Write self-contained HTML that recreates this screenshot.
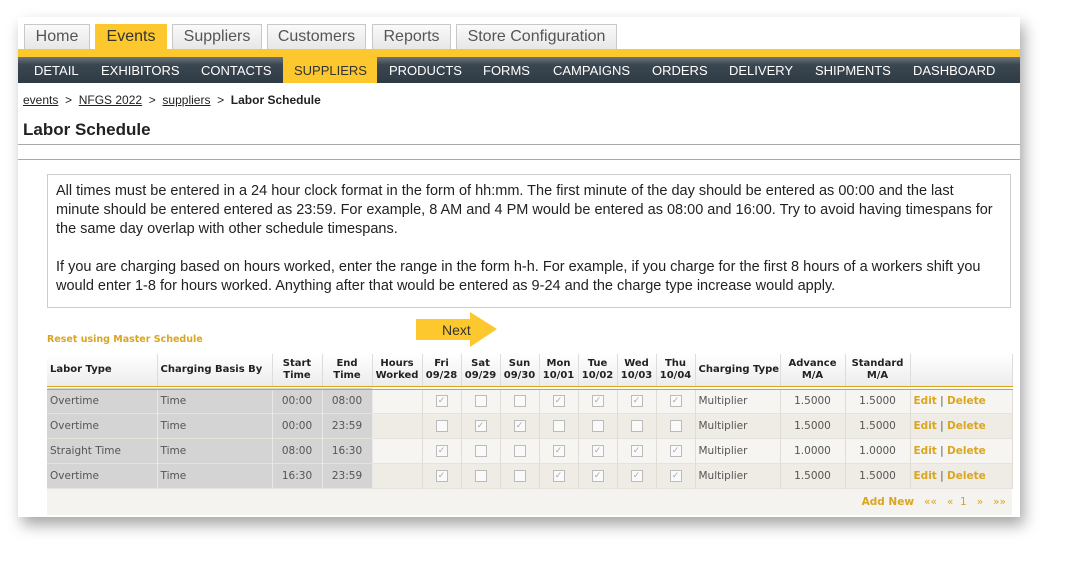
<!DOCTYPE html>
<html><head><meta charset="utf-8"><style>
*{margin:0;padding:0;box-sizing:border-box}
body{width:1068px;height:565px;background:#fff;position:relative;overflow:hidden;font-family:"Liberation Sans",Arial,sans-serif}
.page{position:absolute;left:18px;top:17px;width:1002px;height:500px;background:#fff;box-shadow:4px 8px 14px rgba(0,0,0,.35)}
.a{position:absolute;white-space:nowrap}
.tab{position:absolute;top:7px;height:26px;border:1px solid #c8c8c8;border-bottom:none;background:linear-gradient(#fafafa,#e6e6e6);color:#555;font-size:16px;text-align:center;line-height:24px}
.tab.on{background:#fcc82d;border-color:#fcc82d;color:#333}
.ybar{position:absolute;left:0;top:32px;width:1002px;height:8px;background:#fcc82d}
.nav{position:absolute;left:0;top:40px;width:1002px;height:26px;background:linear-gradient(#6d757c,#3a4650 30%,#2e3a44)}
.nav span{position:absolute;top:0;line-height:27px;color:#fff;font-size:13px}
.sel{position:absolute;left:265px;top:40px;width:94px;height:26px;background:#fcc82d}
.info{position:absolute;left:29px;top:157px;width:964px;height:134px;border:1px solid #ccc;padding:7px 13px 7px 8px;font-size:14.5px;line-height:19px;color:#222}
table{position:absolute;left:29px;top:337px;border-collapse:collapse;font-family:"DejaVu Sans",Verdana,sans-serif;font-size:10.5px;color:#555;table-layout:fixed}
th{height:34px;font-size:10px;color:#222;background:linear-gradient(#fff,#ececec);border-right:1px solid #ddd;border-bottom:4px double #d8a41a;line-height:12px;font-weight:bold}
td{height:25px;border-right:1px solid #e0ddd4;border-top:1px solid #e6e3da;text-align:center}
td.l{text-align:left;padding-left:3px}
td.g{background:#d6d6d6;border-right:1px solid #e8e8e8}
tr.o td{background:#f6f5f1}tr.e td{background:#eeece4}
tr.o td.g,tr.e td.g{background:#d4d4d4}
.cb{display:inline-block;width:12px;height:12px;border:1px solid #bbb;background:#fafafa;font-size:9px;line-height:10px;color:#aaa;vertical-align:middle}
.lk{color:#daa520;font-weight:bold}
</style></head><body>
<div class="page">
<div class="tab" style="left:6px;width:66px">Home</div>
<div class="tab on" style="left:77px;width:72px">Events</div>
<div class="tab" style="left:154px;width:90px">Suppliers</div>
<div class="tab" style="left:249px;width:99px">Customers</div>
<div class="tab" style="left:354px;width:79px">Reports</div>
<div class="tab" style="left:438px;width:161px">Store Configuration</div>
<div class="ybar"></div>
<div class="nav"></div>
<div class="sel"></div>
<div class="nav" style="background:none">
<span style="left:16px">DETAIL</span><span style="left:83px">EXHIBITORS</span><span style="left:183px">CONTACTS</span><span style="left:276px;color:#333">SUPPLIERS</span><span style="left:371px">PRODUCTS</span><span style="left:465px">FORMS</span><span style="left:535px">CAMPAIGNS</span><span style="left:634px">ORDERS</span><span style="left:711px">DELIVERY</span><span style="left:797px">SHIPMENTS</span><span style="left:895px">DASHBOARD</span>
</div>
<div class="a" style="left:5px;top:76px;font-size:12px;color:#222"><u>events</u> &nbsp;&gt;&nbsp; <u>NFGS 2022</u> &nbsp;&gt;&nbsp; <u>suppliers</u> &nbsp;&gt;&nbsp; <b>Labor Schedule</b></div>
<div class="a" style="left:5px;top:103px;font-size:17px;font-weight:bold;color:#222">Labor Schedule</div>
<div class="a" style="left:0;top:127px;width:1002px;height:1px;background:#aaa"></div>
<div class="a" style="left:0;top:142px;width:1002px;height:1px;background:#aaa"></div>
<div class="info">All times must be entered in a 24 hour clock format in the form of hh:mm. The first minute of the day should be entered as 00:00 and the last<br>minute should be entered entered as 23:59. For example, 8 AM and 4 PM would be entered as 08:00 and 16:00. Try to avoid having timespans for<br>the same day overlap with other schedule timespans.<br><br>If you are charging based on hours worked, enter the range in the form h-h. For example, if you charge for the first 8 hours of a workers shift you<br>would enter 1-8 for hours worked. Anything after that would be entered as 9-24 and the charge type increase would apply.</div>
<svg class="a" style="left:398px;top:295px" width="82" height="36"><polygon points="0,7 54,7 54,0 81,17 54,35 54,28 0,28" fill="#fcc82d"/><text x="26" y="23" font-family="Liberation Sans,Arial,sans-serif" font-size="14" fill="#333">Next</text></svg>
<div class="a lk" style="left:29px;top:317px;font-family:'DejaVu Sans',Verdana,sans-serif;font-size:9.5px">Reset using Master Schedule</div>
<table>
<colgroup><col style="width:110px"><col style="width:115px"><col style="width:50px"><col style="width:50px"><col style="width:50px"><col style="width:39px"><col style="width:39px"><col style="width:39px"><col style="width:39px"><col style="width:39px"><col style="width:39px"><col style="width:39px"><col style="width:85px"><col style="width:65px"><col style="width:65px"><col style="width:102px"></colgroup>
<tr><th style="text-align:left;padding-left:3px">Labor Type</th><th style="text-align:left;padding-left:3px">Charging Basis By</th><th>Start<br>Time</th><th>End<br>Time</th><th>Hours<br>Worked</th><th>Fri<br>09/28</th><th>Sat<br>09/29</th><th>Sun<br>09/30</th><th>Mon<br>10/01</th><th>Tue<br>10/02</th><th>Wed<br>10/03</th><th>Thu<br>10/04</th><th style="text-align:left;padding-left:3px">Charging Type</th><th>Advance<br>M/A</th><th>Standard<br>M/A</th><th></th></tr>
<tr class="o"><td class="g l">Overtime</td><td class="g l">Time</td><td class="g">00:00</td><td class="g">08:00</td><td></td><td><span class="cb">✓</span></td><td><span class="cb"></span></td><td><span class="cb"></span></td><td><span class="cb">✓</span></td><td><span class="cb">✓</span></td><td><span class="cb">✓</span></td><td><span class="cb">✓</span></td><td class="l">Multiplier</td><td>1.5000</td><td>1.5000</td><td class="l"><span class="lk">Edit</span> | <span class="lk">Delete</span></td></tr>
<tr class="e"><td class="g l">Overtime</td><td class="g l">Time</td><td class="g">00:00</td><td class="g">23:59</td><td></td><td><span class="cb"></span></td><td><span class="cb">✓</span></td><td><span class="cb">✓</span></td><td><span class="cb"></span></td><td><span class="cb"></span></td><td><span class="cb"></span></td><td><span class="cb"></span></td><td class="l">Multiplier</td><td>1.5000</td><td>1.5000</td><td class="l"><span class="lk">Edit</span> | <span class="lk">Delete</span></td></tr>
<tr class="o"><td class="g l">Straight Time</td><td class="g l">Time</td><td class="g">08:00</td><td class="g">16:30</td><td></td><td><span class="cb">✓</span></td><td><span class="cb"></span></td><td><span class="cb"></span></td><td><span class="cb">✓</span></td><td><span class="cb">✓</span></td><td><span class="cb">✓</span></td><td><span class="cb">✓</span></td><td class="l">Multiplier</td><td>1.0000</td><td>1.0000</td><td class="l"><span class="lk">Edit</span> | <span class="lk">Delete</span></td></tr>
<tr class="e"><td class="g l">Overtime</td><td class="g l">Time</td><td class="g">16:30</td><td class="g">23:59</td><td></td><td><span class="cb">✓</span></td><td><span class="cb"></span></td><td><span class="cb"></span></td><td><span class="cb">✓</span></td><td><span class="cb">✓</span></td><td><span class="cb">✓</span></td><td><span class="cb">✓</span></td><td class="l">Multiplier</td><td>1.5000</td><td>1.5000</td><td class="l"><span class="lk">Edit</span> | <span class="lk">Delete</span></td></tr>
<tr><td colspan="16" style="height:27px;background:#f4f3ef;text-align:right;padding-right:6px;border-right:none"><span class="lk">Add New</span> &nbsp; <span style="color:#daa520">«« &nbsp; « &nbsp;1 &nbsp; » &nbsp; »»</span></td></tr>
</table>
</div>
</body></html>
